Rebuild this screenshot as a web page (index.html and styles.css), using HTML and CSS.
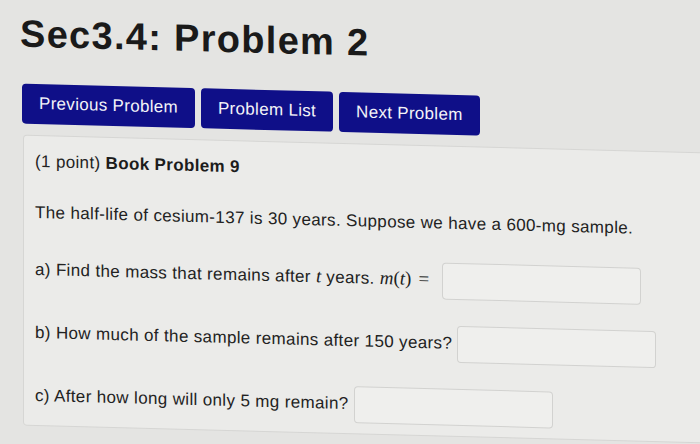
FILE: index.html
```html
<!DOCTYPE html>
<html lang="en">
<head>
  <meta charset="UTF-8">
  <meta name="viewport" content="width=device-width, initial-scale=1.0">
  <title>Sec3.4: Problem 2</title>
  <link rel="stylesheet" href="styles.css">
</head>
<body>

  <div class="page">
    <h1>Sec3.4: Problem 2</h1>

    <div class="nav-buttons">
      <button class="nav-button">Previous Problem</button>
      <button class="nav-button">Problem List</button>
      <button class="nav-button">Next Problem</button>
    </div>

    <div class="problem">
      <p class="problem-header">(1 point) <strong>Book Problem 9</strong></p>

      <p class="problem-text">The half-life of cesium-137 is 30 years. Suppose we have a 600-mg sample.</p>

      <p class="question">a) Find the mass that remains after <span class="math">t</span> years. <span class="math">m</span><span class="math-up">(</span><span class="math">t</span><span class="math-up">)</span><span class="math-up equals">=</span> <input type="text" class="answer"></p>

      <p class="question">b) How much of the sample remains after 150 years? <input type="text" class="answer"></p>

      <p class="question">c) After how long will only 5 mg remain? <input type="text" class="answer"></p>
    </div>
  </div>

</body>
</html>
```

FILE: styles.css
```css
html, body {
  overflow: hidden;
}
body {
  font-family: 'Liberation Sans', Arial, sans-serif;
  background-color: #e4e4e2;
  color: #222;
  margin: 0;
  padding: 0;
  height: 444px;
}
.page {
  padding: 0 0 0 20px;
  transform: skewY(1.5deg);
  transform-origin: 0 0;
}
h1 {
  font-size: 38px;
  font-weight: bold;
  letter-spacing: 1.3px;
  color: #1a1a1a;
  margin: 0;
  padding-top: 13px;
  line-height: 40px;
}
.nav-buttons {
  display: flex;
  gap: 6px;
  margin-top: 30px;
  padding-left: 2px;
}
.nav-button {
  font-family: 'Liberation Sans', Arial, sans-serif;
  font-size: 17px;
  letter-spacing: 0.3px;
  height: 40px;
  padding: 0 17px;
  background-color: #0f0f88;
  color: #f4f4f8;
  border: none;
  border-radius: 4px;
}
.problem {
  width: 720px;
  margin-top: 11px;
  margin-left: 3px;
  padding: 14px 11px 10px 11px;
  background-color: #ebebe9;
  border: 1px solid #d6d6d4;
  border-radius: 4px;
  font-size: 17px;
  letter-spacing: 0.35px;
}
.problem p {
  margin: 0;
  line-height: 24px;
}
.problem-header strong {
  color: #1c1c1c;
}
.problem .problem-text {
  margin-top: 27px;
}
.problem .question {
  margin-top: 25px;
  line-height: 37px;
}
.math {
  font-family: 'Liberation Serif', 'Times New Roman', serif;
  font-style: italic;
  font-size: 19px;
  letter-spacing: 0;
}
.math-up {
  font-family: 'Liberation Serif', 'Times New Roman', serif;
  font-size: 19px;
  letter-spacing: 0;
}
.equals {
  margin: 0 8px 0 7px;
}
.answer {
  width: 199px;
  height: 37px;
  box-sizing: border-box;
  margin: 0;
  vertical-align: middle;
  background-color: #efefed;
  border: 1px solid #d2d2d0;
  border-radius: 4px;
}
```
